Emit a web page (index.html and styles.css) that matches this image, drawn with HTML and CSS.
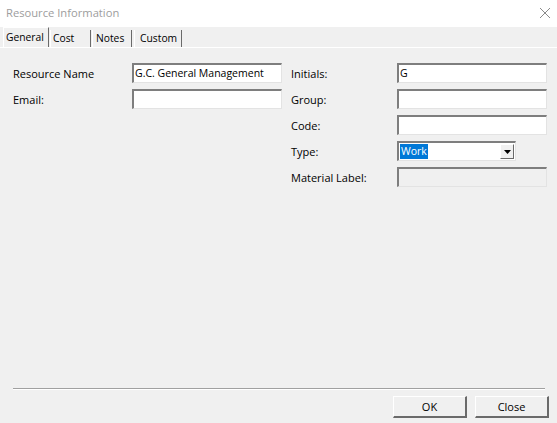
FILE: index.html
```html
<!DOCTYPE html>
<html>
<head>
<meta charset="utf-8">
<link rel="stylesheet" href="styles.css">
</head>
<body>
<div class="window">
  <div class="titlebar">
    <span class="title">Resource Information</span>
    <svg class="close" width="12" height="12" viewBox="0 0 12 12"><path d="M1 1L11 11M11 1L1 11" stroke="#8a8a8a" stroke-width="1" fill="none"/></svg>
  </div>
  <div class="tabs">
    <div class="tab active">General</div>
    <div class="tab">Cost</div>
    <div class="tab">Notes</div>
    <div class="tab">Custom</div>
  </div>
  <div class="content">
    <div class="form">
      <div class="col left">
        <div class="row"><span class="label">Resource Name</span><div class="field">G.C. General Management</div></div>
        <div class="row"><span class="label">Email:</span><div class="field"></div></div>
      </div>
      <div class="col right">
        <div class="row"><span class="label">Initials:</span><div class="field">G</div></div>
        <div class="row"><span class="label">Group:</span><div class="field"></div></div>
        <div class="row"><span class="label">Code:</span><div class="field"></div></div>
        <div class="row"><span class="label">Type:</span>
          <div class="field select"><span class="sel">Work</span>
            <span class="drop"><svg width="7" height="4" viewBox="0 0 7 4"><path d="M0 0H7L3.5 4Z" fill="#000"/></svg></span>
          </div>
        </div>
        <div class="row"><span class="label">Material Label:</span><div class="field disabled"></div></div>
      </div>
    </div>
  </div>
  <div class="footer">
    <div class="sep"></div>
    <div class="buttons">
      <div class="btn">OK</div>
      <div class="btn">Close</div>
    </div>
  </div>
</div>
</body>
</html>
```
FILE: styles.css
```css
html, body {
  margin: 0;
  padding: 0;
}
body {
  font-family: "Open Sans", "Noto Sans", "Liberation Sans", sans-serif;
  font-size: 11px;
  color: #000;
  background: #f0f0f0;
}
.window {
  width: 557px;
  height: 423px;
  display: flex;
  flex-direction: column;
  background: #f0f0f0;
  overflow: hidden;
}
.titlebar {
  height: 27px;
  background: #fff;
  display: flex;
  align-items: center;
  justify-content: space-between;
  padding: 0 6px 3px 6px;
  box-sizing: border-box;
}
.title {
  color: #9d9d9d;
  font-size: 11.2px;
}
.close {
  margin-top: 1px;
}
.tabs {
  height: 20px;
  display: flex;
  align-items: flex-end;
  border-bottom: 1px solid #fff;
  padding-left: 3px;
  font-size: 10.3px;
}
.tab {
  height: 17px;
  line-height: 17px;
  padding: 0 0 0 2px;
  border-left: 1px solid #fff;
  border-right: 1px solid #6a6a6a;
  box-sizing: border-box;
  white-space: nowrap;
}
.tab.active {
  width: 46px;
  height: 20px;
  line-height: 18px;
  padding: 0 0 2px 2px;
  border-top: 1px solid #fff;
  margin-right: 1px;
}
.tab:nth-child(2) { width: 41px; margin-right: 1px; }
.tab:nth-child(3) { width: 40px; margin-right: 2px; padding-left: 3px; }
.tab:nth-child(4) { width: 48px; padding-left: 5px; }
.content {
  flex: 1;
  padding: 15px 0 0 13px;
}
.form {
  display: flex;
}
.col {
  display: flex;
  flex-direction: column;
  gap: 6px;
}
.left {
  width: 278px;
}
.row {
  display: flex;
  align-items: center;
  height: 20px;
}
.left .label { width: 119px; }
.right .label { width: 106px; }
.field {
  width: 150px;
  height: 20px;
  box-sizing: border-box;
  background: #fff;
  border-top: 2px solid #7e7e7e;
  border-left: 2px solid #7e7e7e;
  border-right: 1px solid #e3e3e3;
  border-bottom: 1px solid #e3e3e3;
  padding-left: 1px;
  line-height: 16px;
  white-space: nowrap;
  font-size: 10.5px;
}
.field.disabled {
  background: #f0f0f0;
}
.field.select {
  width: 119px;
  display: flex;
  justify-content: space-between;
  padding-left: 0;
}
.sel {
  background: #0078d7;
  color: #fff;
  height: 15px;
  line-height: 15px;
  padding: 0 1px 0 1px;
  margin-top: 1px;
  margin-left: 1px;
}
.drop {
  width: 14px;
  height: 15px;
  margin: 1px 1px 0 0;
  box-sizing: border-box;
  background: #f0f0f0;
  border-right: 1px solid #6a6a6a;
  border-bottom: 1px solid #6a6a6a;
  border-top: 1px solid #fff;
  border-left: 1px solid #fff;
  display: flex;
  align-items: center;
  justify-content: center;
}
.footer {
  height: 35px;
  padding: 0 8px 5px 13px;
  box-sizing: border-box;
}
.sep {
  width: 532px;
  height: 1px;
  background: #a0a0a0;
  border-bottom: 1px solid #fff;
}
.buttons {
  display: flex;
  justify-content: flex-end;
  gap: 8px;
  margin-top: 6px;
}
.btn {
  width: 74px;
  height: 22px;
  box-sizing: border-box;
  text-align: center;
  line-height: 19px;
  border-top: 1px solid #fff;
  border-left: 1px solid #fff;
  border-right: 2px solid #6a6a6a;
  border-bottom: 2px solid #6a6a6a;
  background: #f0f0f0;
}
```
